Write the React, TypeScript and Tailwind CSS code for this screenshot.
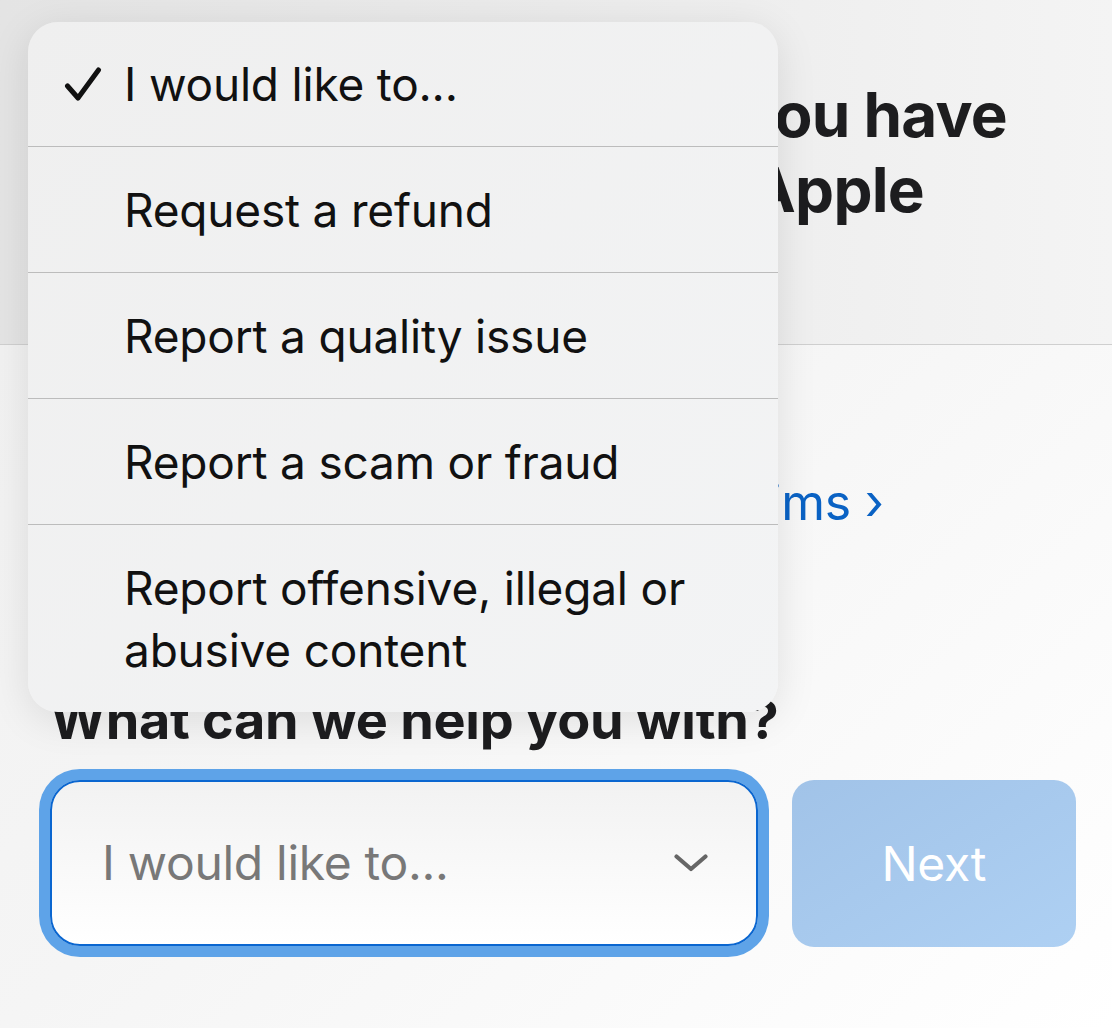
import { useState } from "react";

const options = [
  "Request a refund",
  "Report a quality issue",
  "Report a scam or fraud",
  "Report offensive, illegal or abusive content",
];

function CheckMark() {
  return (
    <svg width="38" height="34" viewBox="0 0 38 34" fill="none">
      <path
        d="M3.5 19 L14 31 L34.5 3"
        stroke="#111"
        strokeWidth="5"
        strokeLinecap="round"
        strokeLinejoin="round"
      />
    </svg>
  );
}

function Chevron() {
  return (
    <svg width="34" height="18" viewBox="0 0 34 18" fill="none">
      <path
        d="M2.5 2.5 L17 15 L31.5 2.5"
        stroke="#666"
        strokeWidth="4.2"
        strokeLinecap="round"
        strokeLinejoin="round"
      />
    </svg>
  );
}

function OptionsMenu({ selected }: { selected: string }) {
  return (
    <div className="absolute left-[28px] top-[22px] w-[750px] h-[690px] rounded-[30px] bg-gradient-to-br from-[#efefef] to-[#f3f4f5] shadow-[0_8px_40px_rgba(0,0,0,0.10)] flex flex-col overflow-hidden">
      <div className="h-[125px] flex items-center border-b border-[#bcbcbc]">
        <div className="w-[96px] flex justify-end pr-[22px]">
          {selected === "" && <CheckMark />}
        </div>
        <span className="text-[46px] leading-[62px] text-[#111] tracking-[-0.2px]">
          I would like to...
        </span>
      </div>
      {options.map((label, i) => (
        <div
          key={label}
          className={
            i === options.length - 1
              ? "flex-1 flex items-center pl-[96px] pr-[70px]"
              : "h-[126px] flex items-center pl-[96px] border-b border-[#bcbcbc]"
          }
        >
          <span className="text-[46px] leading-[62px] text-[#111] tracking-[-0.2px]">
            {label}
          </span>
        </div>
      ))}
    </div>
  );
}

export default function App() {
  const [choice] = useState("");

  return (
    <div className="relative w-[1112px] h-[1028px] overflow-hidden font-['Inter','Noto_Sans',sans-serif] bg-gradient-to-br from-[#efefef] via-[#f5f5f5] to-white">
      <header className="h-[345px] pl-[70px] pt-[77px] border-b border-[#cfcfcf] bg-gradient-to-r from-[#e4e4e4] via-[#ebebeb] to-[#f4f4f4]">
        <h1 className="text-[62px] leading-[75px] font-bold text-[#1d1d1f] tracking-[-0.8px]">
          Tell us about the issue you have
          <br />
          with content bought at Apple
        </h1>
      </header>

      <main className="pl-[50px] pr-[36px] pt-[127px]">
        <a className="block text-[50px] leading-[60px] text-[#0a62c4] tracking-[-0.3px]">
          Check the status of all your claims ›
        </a>

        <h2 className="mt-[160px] text-[54px] leading-[56px] font-bold text-[#1d1d1f] tracking-[-0.3px] whitespace-nowrap">
          What can we help you with?
        </h2>

        <div className="mt-[32px] flex gap-[34px]">
          <div className="w-[709px] h-[166px] rounded-[30px] border-2 border-[#0a66d0] ring-[11px] ring-[#5ea3e8] bg-gradient-to-b from-[#f2f2f2] to-white flex items-center justify-between pl-[50px] pr-[48px]">
            <span className="text-[48px] text-[#787878] tracking-[-0.3px]">
              I would like to...
            </span>
            <Chevron />
          </div>
          <button className="w-[285px] h-[167px] rounded-[22px] bg-gradient-to-br from-[#a1c3e8] to-[#aed0f3] text-white text-[48px] tracking-[-0.3px]">
            Next
          </button>
        </div>
      </main>

      <OptionsMenu selected={choice} />
    </div>
  );
}
